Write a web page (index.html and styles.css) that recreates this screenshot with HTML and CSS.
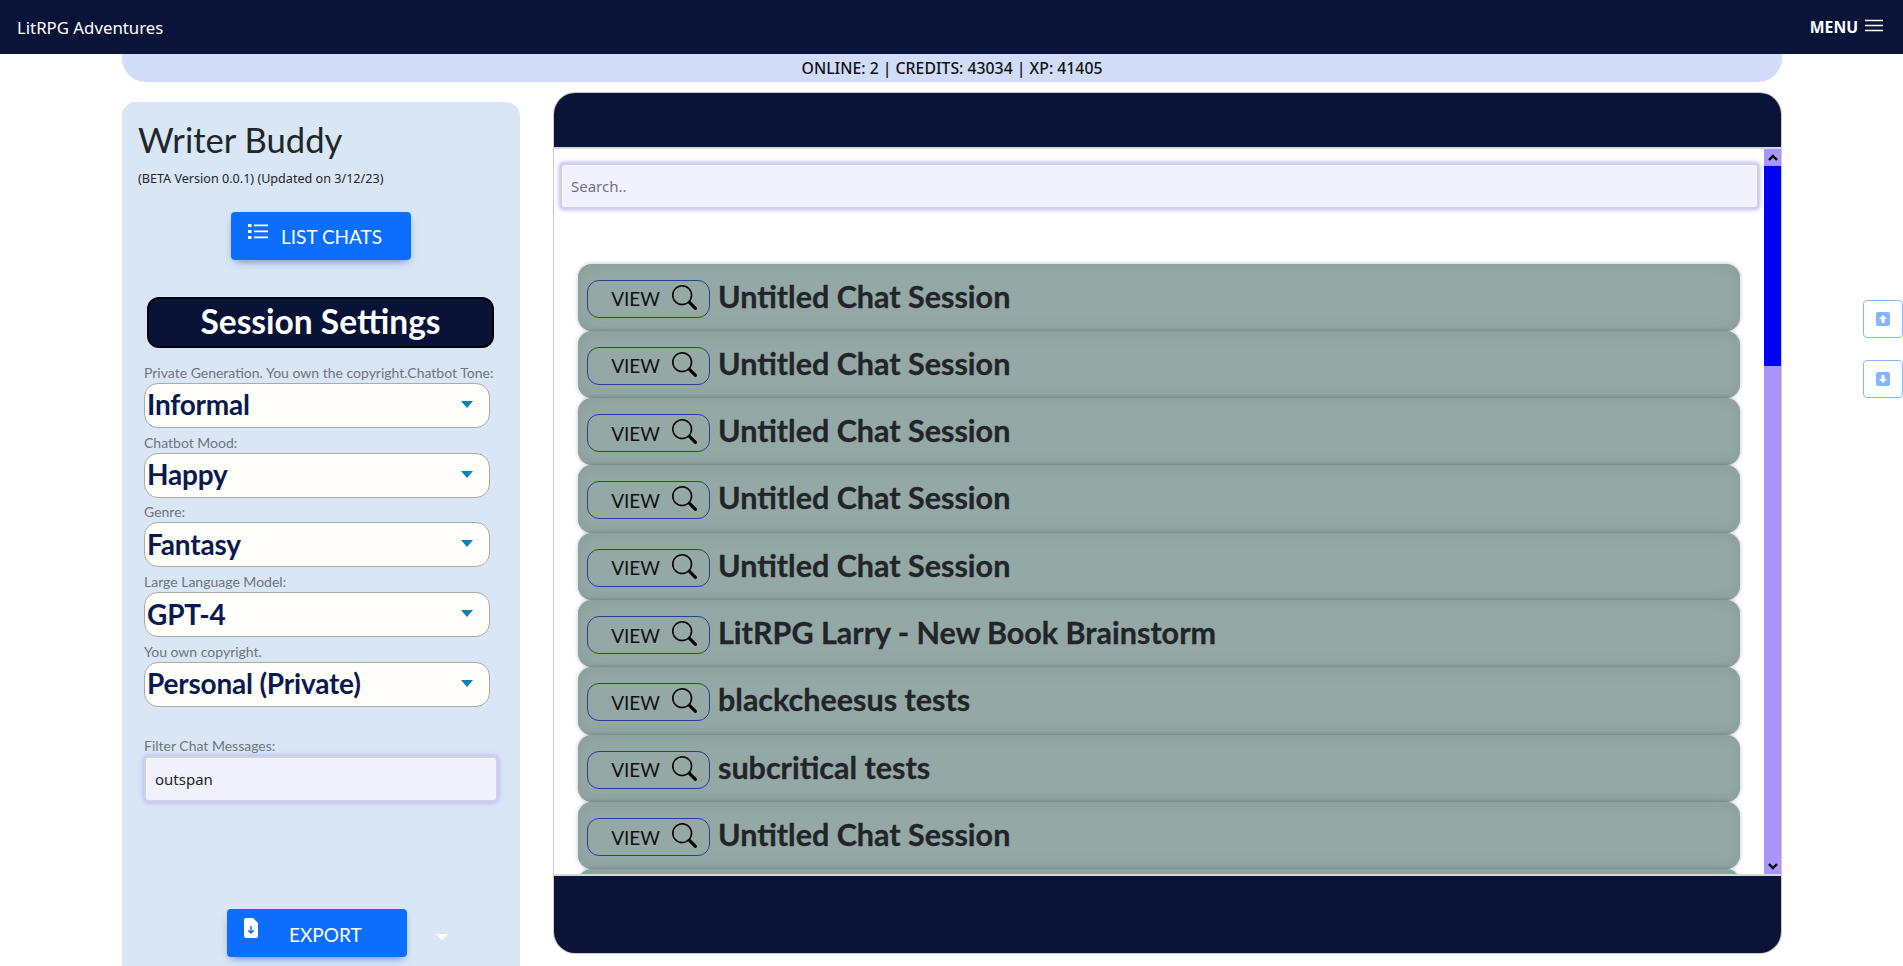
FILE: index.html
```html
<!DOCTYPE html>
<html lang="en">
<head>
  <meta charset="UTF-8">
  <title>LitRPG Adventures - Writer Buddy</title>
  <link rel="stylesheet" href="styles.css">
</head>
<body>
  <nav class="navbar">
    <a class="brand">LitRPG Adventures</a>
    <button class="menu-btn">MENU
      <svg width="18" height="14" viewBox="0 0 18 14"><path d="M0 1.500h18M0 6.500h18M0 11.500h18" stroke="#fff" stroke-width="1.500"/></svg>
    </button>
  </nav>

  <div class="status-bar">ONLINE: 2 | CREDITS: 43034 | XP: 41405</div>

  <main class="page">
    <aside class="sidebar">
      <h1>Writer Buddy</h1>
      <p class="version">(BETA Version 0.0.1) (Updated on 3/12/23)</p>

      <button class="btn-blue list-btn">
        <svg class="btn-icon" width="20" height="18" viewBox="0 0 20 18" fill="#fff"><path d="M0 1h3.500v3H0zM0 7h3.500v3H0zM0 13h3.500v3H0zM6 1.500h14v1.800H6zM6 7.500h14v1.800H6zM6 13.500h14v1.800H6z"/></svg>
        LIST CHATS
      </button>

      <h2 class="settings-title">Session Settings</h2>

      <div class="fields">
        <label>Private Generation. You own the copyright.Chatbot Tone:</label>
        <div class="select-wrap"><select><option>Informal</option></select></div>
        <label>Chatbot Mood:</label>
        <div class="select-wrap"><select><option>Happy</option></select></div>
        <label>Genre:</label>
        <div class="select-wrap"><select><option>Fantasy</option></select></div>
        <label>Large Language Model:</label>
        <div class="select-wrap"><select><option>GPT-4</option></select></div>
        <label>You own copyright.</label>
        <div class="select-wrap"><select><option>Personal (Private)</option></select></div>
      </div>

      <div class="filter">
        <label>Filter Chat Messages:</label>
        <input type="text" class="text-input" value="outspan">
      </div>

      <div class="export-row">
        <button class="btn-blue export-btn">
          <svg class="btn-icon" width="16" height="22" viewBox="0 0 16 22"><path d="M3 1h7l5 5v13a2 2 0 0 1-2 2H3a2 2 0 0 1-2-2V3a2 2 0 0 1 2-2z" fill="#fff"/><path d="M8 9v7M5.200 13.200 8 16l2.800-2.800" fill="none" stroke="#0d6efd" stroke-width="1.400"/></svg>
          <span class="export-label">EXPORT</span>
        </button>
        <span class="caret-white"></span>
      </div>
    </aside>

    <section class="chat-panel">
      <div class="panel-head"></div>
      <div class="panel-body">
        <div class="list-area">
          <input type="text" class="text-input search" placeholder="Search..">
          <div class="rows">
            <div class="row"><button class="view-btn">VIEW <svg width="25" height="25" viewBox="0 0 16 16"><path d="M11.742 10.344a6.500 6.500 0 1 0-1.397 1.398h-.001c.03.04.062.078.098.115l3.850 3.850a1 1 0 0 0 1.415-1.414l-3.850-3.850a1.007 1.007 0 0 0-.115-.1zM12 6.500a5.500 5.500 0 1 1-11 0 5.500 5.500 0 0 1 11 0z"/></svg></button><span class="row-title">Untitled Chat Session</span></div>
            <div class="row"><button class="view-btn">VIEW <svg width="25" height="25" viewBox="0 0 16 16"><path d="M11.742 10.344a6.500 6.500 0 1 0-1.397 1.398h-.001c.03.04.062.078.098.115l3.850 3.850a1 1 0 0 0 1.415-1.414l-3.850-3.850a1.007 1.007 0 0 0-.115-.1zM12 6.500a5.500 5.500 0 1 1-11 0 5.500 5.500 0 0 1 11 0z"/></svg></button><span class="row-title">Untitled Chat Session</span></div>
            <div class="row"><button class="view-btn">VIEW <svg width="25" height="25" viewBox="0 0 16 16"><path d="M11.742 10.344a6.500 6.500 0 1 0-1.397 1.398h-.001c.03.04.062.078.098.115l3.850 3.850a1 1 0 0 0 1.415-1.414l-3.850-3.850a1.007 1.007 0 0 0-.115-.1zM12 6.500a5.500 5.500 0 1 1-11 0 5.500 5.500 0 0 1 11 0z"/></svg></button><span class="row-title">Untitled Chat Session</span></div>
            <div class="row"><button class="view-btn">VIEW <svg width="25" height="25" viewBox="0 0 16 16"><path d="M11.742 10.344a6.500 6.500 0 1 0-1.397 1.398h-.001c.03.04.062.078.098.115l3.850 3.850a1 1 0 0 0 1.415-1.414l-3.850-3.850a1.007 1.007 0 0 0-.115-.1zM12 6.500a5.500 5.500 0 1 1-11 0 5.500 5.500 0 0 1 11 0z"/></svg></button><span class="row-title">Untitled Chat Session</span></div>
            <div class="row"><button class="view-btn">VIEW <svg width="25" height="25" viewBox="0 0 16 16"><path d="M11.742 10.344a6.500 6.500 0 1 0-1.397 1.398h-.001c.03.04.062.078.098.115l3.850 3.850a1 1 0 0 0 1.415-1.414l-3.850-3.850a1.007 1.007 0 0 0-.115-.1zM12 6.500a5.500 5.500 0 1 1-11 0 5.500 5.500 0 0 1 11 0z"/></svg></button><span class="row-title">Untitled Chat Session</span></div>
            <div class="row"><button class="view-btn">VIEW <svg width="25" height="25" viewBox="0 0 16 16"><path d="M11.742 10.344a6.500 6.500 0 1 0-1.397 1.398h-.001c.03.04.062.078.098.115l3.850 3.850a1 1 0 0 0 1.415-1.414l-3.850-3.850a1.007 1.007 0 0 0-.115-.1zM12 6.500a5.500 5.500 0 1 1-11 0 5.500 5.500 0 0 1 11 0z"/></svg></button><span class="row-title">LitRPG Larry - New Book Brainstorm</span></div>
            <div class="row"><button class="view-btn">VIEW <svg width="25" height="25" viewBox="0 0 16 16"><path d="M11.742 10.344a6.500 6.500 0 1 0-1.397 1.398h-.001c.03.04.062.078.098.115l3.850 3.850a1 1 0 0 0 1.415-1.414l-3.850-3.850a1.007 1.007 0 0 0-.115-.1zM12 6.500a5.500 5.500 0 1 1-11 0 5.500 5.500 0 0 1 11 0z"/></svg></button><span class="row-title">blackcheesus tests</span></div>
            <div class="row"><button class="view-btn">VIEW <svg width="25" height="25" viewBox="0 0 16 16"><path d="M11.742 10.344a6.500 6.500 0 1 0-1.397 1.398h-.001c.03.04.062.078.098.115l3.850 3.850a1 1 0 0 0 1.415-1.414l-3.850-3.850a1.007 1.007 0 0 0-.115-.1zM12 6.500a5.500 5.500 0 1 1-11 0 5.500 5.500 0 0 1 11 0z"/></svg></button><span class="row-title">subcritical tests</span></div>
            <div class="row"><button class="view-btn">VIEW <svg width="25" height="25" viewBox="0 0 16 16"><path d="M11.742 10.344a6.500 6.500 0 1 0-1.397 1.398h-.001c.03.04.062.078.098.115l3.850 3.850a1 1 0 0 0 1.415-1.414l-3.850-3.850a1.007 1.007 0 0 0-.115-.1zM12 6.500a5.500 5.500 0 1 1-11 0 5.500 5.500 0 0 1 11 0z"/></svg></button><span class="row-title">Untitled Chat Session</span></div>
            <div class="row"></div>
          </div>
        </div>
        <div class="scrollbar">
          <div class="scroll-arrow"><svg width="10" height="8" viewBox="0 0 10 8"><path d="M1 6l4-4 4 4" fill="none" stroke="#000" stroke-width="2.400"/></svg></div>
          <div class="scroll-thumb"></div>
          <div class="scroll-track"></div>
          <div class="scroll-arrow"><svg width="10" height="8" viewBox="0 0 10 8"><path d="M1 2l4 4 4-4" fill="none" stroke="#000" stroke-width="2.400"/></svg></div>
        </div>
      </div>
      <div class="panel-foot"></div>
    </section>
  </main>

  <div class="jump-btns">
    <button class="jump-btn"><svg width="14" height="14" viewBox="0 0 14 14"><rect width="14" height="14" rx="2" fill="#85b6ff"/><path d="M7 3 3 7h2.500v4h3V7H11z" fill="#fff"/></svg></button>
    <button class="jump-btn"><svg width="14" height="14" viewBox="0 0 14 14"><rect width="14" height="14" rx="2" fill="#85b6ff"/><path d="M7 11 3 7h2.500V3h3v4H11z" fill="#fff"/></svg></button>
  </div>
</body>
</html>
```

FILE: styles.css
```css
* {
  box-sizing: border-box;
}

html, body {
  height: 100%;
}

body {
  font-family: "Noto Sans", "Open Sans", sans-serif;
  background: #fff;
  color: #212529;
  margin: 0;
  overflow: hidden;
}

button {
  font-family: inherit;
  cursor: pointer;
}

/* Top bar */
.navbar {
  height: 54px;
  background: #0a1438;
  color: #fff;
  display: flex;
  justify-content: space-between;
  align-items: center;
  padding: 0 20px 0 17px;
}

.brand {
  font-size: 16.800px;
}

.menu-btn {
  display: flex;
  align-items: center;
  gap: 7px;
  background: none;
  border: none;
  color: #fff;
  font-size: 15.700px;
  font-weight: 700;
  padding: 0;
}

.menu-btn svg {
  margin-top: -2px;
}

.status-bar {
  height: 28px;
  margin: 0 121px 0 122px;
  background: #d0dcf8;
  border-radius: 0 0 24px 24px;
  font-size: 15.800px;
  font-weight: 500;
  line-height: 28px;
  text-align: center;
  color: #111;
}

/* Two columns */
.page {
  display: flex;
  align-items: flex-start;
  gap: 33px;
  margin: 0 121px 0 122px;
}

.sidebar {
  flex: none;
  width: 398px;
  height: 884px;
  margin-top: 20px;
  padding: 0 16px;
  background: #d9e6f5;
  border-radius: 14px 14px 0 0;
  display: flex;
  flex-direction: column;
}

.sidebar h1 {
  font-family: Lato, sans-serif;
  font-size: 34.600px;
  font-weight: 400;
  line-height: 44px;
  margin: 16px 0 0;
}

.version {
  font-size: 12.600px;
  line-height: 16px;
  margin: 9px 0 0;
}

.btn-blue {
  display: flex;
  align-items: center;
  width: 180px;
  height: 48px;
  background: #0d6efd;
  color: #fff;
  border: none;
  border-radius: 4px;
  font-family: Lato, sans-serif;
  font-size: 19px;
  box-shadow: 0 4px 9px -4px #3b71ca;
}

.btn-icon {
  margin-top: -9px;
  flex: none;
}

.list-btn {
  align-self: center;
  margin: 25px 0 0 0;
  padding: 0 0 0 17px;
  gap: 13px;
}

.settings-title {
  width: 347px;
  height: 51px;
  margin: 37px 0 0 9px;
  background: #091338;
  border: 2px solid #000;
  border-radius: 12px;
  color: #fff;
  font-family: Lato, sans-serif;
  font-size: 33.500px;
  font-weight: 700;
  line-height: 44px;
  text-align: center;
}

.fields label, .filter label {
  display: block;
  font-family: Lato, sans-serif;
  font-size: 14px;
  line-height: 18px;
  color: #6c757d;
  height: 18px;
}

.fields {
  width: 346px;
  margin: 10px 0 0 6px;
}

.fields label {
  white-space: nowrap;
  margin-top: 5.750px;
}

.select-wrap {
  position: relative;
  height: 45px;
  margin-top: 1px;
}

.select-wrap::after {
  content: "";
  position: absolute;
  right: 17px;
  top: 18px;
  border-left: 6.500px solid transparent;
  border-right: 6.500px solid transparent;
  border-top: 7px solid #0a84b4;
}

select {
  width: 100%;
  height: 100%;
  appearance: none;
  background: #fffefb;
  border: 1.500px solid #aaa;
  border-radius: 14px;
  color: #0a1a50;
  font-family: Lato, sans-serif;
  font-size: 28px;
  font-weight: 700;
  letter-spacing: -0.2px;
  padding: 0 2px 2px;
}

.filter {
  width: 354px;
  margin: 30px 0 0 6px;
}

.text-input {
  display: block;
  width: 100%;
  height: 46px;
  background: #f1f2fe;
  border: 2px solid #d0d0e6;
  border-radius: 4px;
  box-shadow: 0 0 4px 1px #b9b9f5;
  color: #212529;
  font-family: inherit;
  font-size: 15px;
  padding: 0 9px;
}

.text-input::placeholder {
  color: #6c757d;
}

.filter .text-input {
  margin-top: 1px;
}

.export-row {
  display: flex;
  align-items: center;
  margin: 107px 0 0 89px;
}

.export-btn {
  padding: 0 0 0 16px;
  gap: 30px;
}

.export-label {
  margin-top: 3px;
}

.caret-white {
  margin: 8px 0 0 29px;
  border-left: 6px solid transparent;
  border-right: 6px solid transparent;
  border-top: 6px solid #fff;
}

/* Chat list panel */
.chat-panel {
  flex: none;
  width: 1229px;
  height: 862px;
  margin-top: 10px;
  border: 1px solid #ccc;
  border-radius: 22px;
  overflow: hidden;
  display: flex;
  flex-direction: column;
}

.panel-head {
  flex: none;
  height: 56px;
  background: #0a1438;
  border-bottom: 2px solid #d8d8d8;
}

.panel-body {
  height: 725px;
  display: flex;
  flex: none;
}

.list-area {
  flex: 1;
  overflow: hidden;
  padding: 14px 5px 0 6px;
}

.search {
  height: 46px;
}

.rows {
  margin: 54.500px 0 0 18px;
  width: 1162px;
}

.row {
  display: flex;
  align-items: flex-start;
  gap: 8px;
  height: 67.330px;
  padding: 16px 9px 0;
  background: #94a8a5;
  border-radius: 14px;
  box-shadow: inset 0 0 16px #889c99, 0 0 4px rgba(0,0,0,0.25);
}

.view-btn {
  display: flex;
  align-items: center;
  justify-content: flex-end;
  gap: 12px;
  width: 123px;
  height: 38px;
  padding: 0 12px 0 0;
  background: none;
  border: 1px solid #2b3f8f;
  border-radius: 12px;
  color: #111;
  font-family: Lato, sans-serif;
  font-size: 19px;
}

.view-btn svg {
  margin-top: -3px;
}

.row-title {
  font-family: Lato, sans-serif;
  font-size: 30.500px;
  font-weight: 700;
  line-height: 32px;
  color: #212529;
  white-space: nowrap;
  -webkit-text-stroke: 0.3px #212529;
}

.scrollbar {
  width: 17px;
  flex: none;
  display: flex;
  flex-direction: column;
}

.scroll-arrow {
  height: 17px;
  background: #a994fb;
  display: flex;
  align-items: center;
  justify-content: center;
}

.scroll-thumb {
  height: 200px;
  background: #00f;
}

.scroll-track {
  flex: 1;
  background: #a994fb;
}

.panel-foot {
  flex: 1;
  background: #0a1438;
  border-top: 2px solid #d8d8d8;
}

/* Scroll buttons on the right edge */
.jump-btns {
  position: fixed;
  right: 0;
  top: 300px;
  display: flex;
  flex-direction: column;
  gap: 22px;
}

.jump-btn {
  width: 40px;
  height: 38px;
  padding: 0;
  background: #fff;
  border: 1px solid #85b6ff;
  border-radius: 4px;
  display: flex;
  align-items: center;
  justify-content: center;
}
```
